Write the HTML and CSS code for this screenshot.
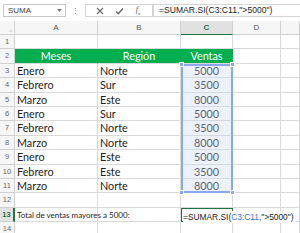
FILE: index.html
```html
<!DOCTYPE html>
<html lang="es">
<head>
    <meta charset="UTF-8">
    <title>SUMAR.SI</title>
    <link rel="stylesheet" href="styles.css">
</head>
<body>
  <div class="toolbar">
    <div class="namebox">
        <span>SUMA</span>
        <svg class="drop" width="5" height="3" viewBox="0 0 5 3"><path d="M0 0h5L2.5 3z" fill="#777"/></svg>
    </div>
    <div class="grip"><i></i><i></i><i></i></div>
    <div class="fxbtns">
        <svg width="8" height="8" viewBox="0 0 8 8"><path d="M1 1l6 6M7 1L1 7" stroke="#666" stroke-width="1.1"/></svg>
        <svg width="9" height="8" viewBox="0 0 9 8"><path d="M1 4.5l2.3 2.3L8 1.5" stroke="#666" stroke-width="1.4" fill="none"/></svg>
        <span class="fx">f<sub>x</sub></span>
    </div>
    <div class="formula">=SUMAR.SI(C3:C11,"&gt;5000")</div>
  </div>

  <div class="sheet">
    <!-- header row -->
    <div class="hd corner"></div>
    <div class="hd">A</div>
    <div class="hd">B</div>
    <div class="hd sel">C</div>
    <div class="hd">D</div>
    <div class="hd"></div>

    <div class="rn">1</div><div class="c"></div><div class="c"></div><div class="c"></div><div class="c"></div><div class="c"></div>

    <div class="rn">2</div>
    <div class="c green">Meses</div>
    <div class="c green">Región</div>
    <div class="c green">Ventas</div>
    <div class="c"></div><div class="c"></div>

    <div class="rn">3</div><div class="c">Enero</div><div class="c">Norte</div><div class="c num">5000</div><div class="c"></div><div class="c"></div>
    <div class="rn">4</div><div class="c">Febrero</div><div class="c">Sur</div><div class="c num">3500</div><div class="c"></div><div class="c"></div>
    <div class="rn">5</div><div class="c">Marzo</div><div class="c">Este</div><div class="c num">8000</div><div class="c"></div><div class="c"></div>
    <div class="rn">6</div><div class="c">Enero</div><div class="c">Sur</div><div class="c num">5000</div><div class="c"></div><div class="c"></div>
    <div class="rn">7</div><div class="c">Febrero</div><div class="c">Norte</div><div class="c num">3500</div><div class="c"></div><div class="c"></div>
    <div class="rn">8</div><div class="c">Marzo</div><div class="c">Norte</div><div class="c num">8000</div><div class="c"></div><div class="c"></div>
    <div class="rn">9</div><div class="c">Enero</div><div class="c">Este</div><div class="c num">5000</div><div class="c"></div><div class="c"></div>
    <div class="rn">10</div><div class="c">Febrero</div><div class="c">Este</div><div class="c num">3500</div><div class="c"></div><div class="c"></div>
    <div class="rn">11</div><div class="c">Marzo</div><div class="c">Norte</div><div class="c num">8000</div><div class="c"></div><div class="c"></div>

    <div class="rn">12</div><div class="c"></div><div class="c"></div><div class="c"></div><div class="c"></div><div class="c"></div>

    <div class="rn active">13</div>
    <div class="c small">Total de ventas mayores a 5000:</div>
    <div class="c"></div>
    <div class="c editing"><span>=SUMAR.SI(<b>C3:C11</b>,"&gt;5000")</span></div>
    <div class="c"></div><div class="c"></div>

    <div class="rn">14</div><div class="c"></div><div class="c"></div><div class="c"></div><div class="c"></div><div class="c"></div>

    <!-- range C3:C11 -->
    <div class="range">
        <i class="h tl"></i><i class="h tr"></i><i class="h bl"></i><i class="h br"></i>
    </div>
  </div>
</body>
</html>
```

FILE: styles.css
```css
body {
    margin: 0;
    background: #fff;
    font-family: Lato, "Open Sans", sans-serif;
    color: #222;
    overflow: hidden;
}
.toolbar {
    height: 21px;
    display: flex;
    align-items: center;
    font-family: "Liberation Sans", Arial, sans-serif;
    font-size: 8px;
    color: #444;
}
.namebox {
    margin-left: 3px;
    width: 63px;
    height: 13px;
    border: 1px solid #c6c6c6;
    box-sizing: border-box;
    display: flex;
    align-items: center;
    justify-content: space-between;
    padding: 0 3px 0 4px;
}
.grip {
    width: 19px;
    display: flex;
    flex-direction: column;
    align-items: center;
    gap: 1.5px;
}
.grip i {
    width: 1px;
    height: 1px;
    background: #999;
}
.fxbtns {
    width: 68px;
    height: 13px;
    border: 1px solid #d4d4d4;
    box-sizing: border-box;
    display: flex;
    align-items: center;
    justify-content: space-around;
    padding: 0 6px 0 4px;
}
.fx {
    font-family: "Liberation Serif", serif;
    font-style: italic;
    font-size: 8px;
    color: #555;
}
.fx sub {
    font-size: 5px;
}
.formula {
    flex: 1;
    height: 13px;
    border: 1px solid #d4d4d4;
    border-right: none;
    box-sizing: border-box;
    padding-left: 5px;
    line-height: 11px;
    font-size: 8.6px;
    color: #222;
}
.sheet {
    position: relative;
    display: grid;
    grid-template-columns: 15px 83px 83px 52px 48px 1fr;
    grid-template-rows: 14px repeat(14, 14.4px);
}
.sheet > div {
    box-sizing: border-box;
    border-right: 1px solid #dadada;
    border-bottom: 1px solid #dadada;
    white-space: nowrap;
    overflow: hidden;
}
.hd {
    background: #f6f6f6;
    border-color: #d0d0d0 !important;
    font-family: "Liberation Sans", Arial, sans-serif;
    font-size: 8px;
    color: #555;
    text-align: center;
    line-height: 14px;
}
.hd.corner {
    background: linear-gradient(135deg, #f6f6f6 72%, #dcdcdc 72%);
    background-size: 6px 6px;
    background-repeat: no-repeat;
    background-position: right 2px bottom 2px;
    background-color: #f6f6f6;
}
.hd.sel {
    background: #e1e1e1;
    color: #217346;
    font-weight: bold;
    border-bottom: 1px solid #217346 !important;
}
.rn {
    background: #f6f6f6;
    border-color: #d0d0d0 !important;
    font-family: "Liberation Sans", Arial, sans-serif;
    font-size: 7.5px;
    color: #666;
    text-align: center;
    line-height: 14px;
}
.rn.active {
    background: #e1e1e1;
    color: #217346;
    font-weight: bold;
    border-right: 2px solid #217346 !important;
}
.c {
    font-size: 10.8px;
    line-height: 14px;
    padding-left: 2px;
}
.c.green {
    background: #00b050;
    border-right-color: #00b050;
    color: #fff;
    text-align: center;
    padding: 0;
}
.c.num {
    text-align: center;
    padding: 0;
}
.c.small {
    font-size: 8px;
    overflow: visible;
}
.c.editing {
    position: relative;
    overflow: visible;
    border: 1px solid #217346;
    padding-left: 1px;
    z-index: 2;
}
.editing span {
    display: inline-block;
    background: #fff;
    font-family: "Liberation Sans", Arial, sans-serif;
    font-size: 8.4px;
    line-height: 12px;
    padding-right: 2px;
}
.editing b {
    font-weight: normal;
    color: #3a6fdc;
}
.sheet > .range {
    position: absolute;
    left: 181px;
    top: 42.8px;
    width: 52px;
    height: 129.6px;
    box-sizing: border-box;
    border: 2px solid #8aa8ec;
    background: rgba(200, 215, 245, 0.35);
    overflow: visible;
}
.range .h {
    position: absolute;
    width: 3px;
    height: 3px;
    background: #8aa8ec;
    border: 1px solid #fff;
}
.h.tl { left: -4px; top: -4px; }
.h.tr { right: -4px; top: -4px; }
.h.bl { left: -4px; bottom: -4px; }
.h.br { right: -4px; bottom: -4px; }
```
